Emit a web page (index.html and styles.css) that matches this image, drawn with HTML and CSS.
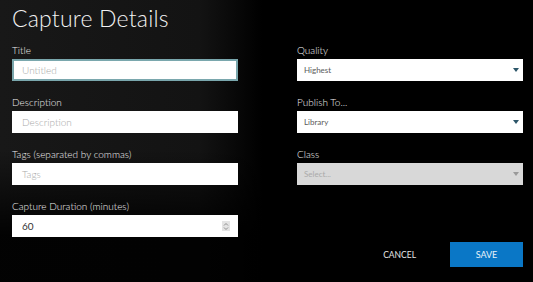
FILE: index.html
```
<!DOCTYPE html>
<html>
<head>
<meta charset="utf-8">
<link rel="stylesheet" href="styles.css">
</head>
<body>
<div class="dialog">
  <h1 class="heading">Capture Details</h1>
  <div class="cols">
    <div class="col">
      <div class="field">
        <label class="label">Title</label>
        <div class="input focused"><span class="ph">Untitled</span></div>
      </div>
      <div class="field">
        <label class="label">Description</label>
        <div class="input"><span class="ph">Description</span></div>
      </div>
      <div class="field">
        <label class="label">Tags (separated by commas)</label>
        <div class="input"><span class="ph">Tags</span></div>
      </div>
      <div class="field">
        <label class="label">Capture Duration (minutes)</label>
        <div class="input"><span class="val">60</span>
          <span class="spin">
            <svg width="6" height="9" viewBox="0 0 6 9"><path d="M1 3.5 L3 1.5 L5 3.5" fill="none" stroke="#777" stroke-width="0.8"/><path d="M1 5.5 L3 7.5 L5 5.5" fill="none" stroke="#777" stroke-width="0.8"/></svg>
          </span>
        </div>
      </div>
    </div>
    <div class="col">
      <div class="field">
        <label class="label">Quality</label>
        <div class="select"><span class="sval">Highest</span><span class="arrow"></span></div>
      </div>
      <div class="field">
        <label class="label">Publish To...</label>
        <div class="select"><span class="sval">Library</span><span class="arrow"></span></div>
      </div>
      <div class="field">
        <label class="label">Class</label>
        <div class="select disabled"><span class="sval">Select...</span><span class="arrow"></span></div>
      </div>
      <div class="actions">
        <span class="cancel">CANCEL</span>
        <span class="save">SAVE</span>
      </div>
    </div>
  </div>
</div>
</body>
</html>
```
FILE: styles.css
```
html, body {
  margin: 0;
  padding: 0;
  background: #000;
}
body {
  width: 533px;
  height: 282px;
  overflow: hidden;
  font-family: Lato, "Open Sans", sans-serif;
}
.dialog {
  width: 533px;
  height: 282px;
  box-sizing: border-box;
  padding: 4px 10px 0 12px;
  background:
    linear-gradient(to bottom, rgba(0,0,0,0) 0, rgba(0,0,0,0) 150px, rgba(0,0,0,0.9) 235px),
    linear-gradient(to right, #181818 0, #131313 200px, #000 262px);
}
.heading {
  margin: 0;
  font-size: 23px;
  line-height: 28px;
  font-weight: 300;
  color: #f2f2f2;
  letter-spacing: 0.2px;
}
.cols {
  display: grid;
  grid-template-columns: 226px 226px;
  column-gap: 59px;
  margin-top: 12px;
}
.col {
  display: flex;
  flex-direction: column;
  gap: 15px;
}
.field {
  display: flex;
  flex-direction: column;
}
.label {
  font-size: 10px;
  line-height: 13px;
  font-weight: 300;
  color: #f0f0f0;
  margin-bottom: 2px;
}
.input {
  height: 22px;
  box-sizing: border-box;
  background: #fff;
  display: flex;
  align-items: center;
  padding: 0 10px;
  font-size: 10px;
  font-weight: 300;
  position: relative;
}
.input.focused {
  border: 2px solid #7aa7ad;
  padding: 0 8px;
}
.ph { color: #a8a8a8; }
.val { color: #333; font-weight: 400; }
.spin {
  margin-left: auto;
  width: 8px;
  height: 10px;
  background: #e4e4e4;
  display: flex;
  align-items: center;
  justify-content: center;
  margin-right: -2px;
}
.select {
  height: 22px;
  box-sizing: border-box;
  background: #fff;
  display: flex;
  align-items: center;
  padding: 0 4px 0 7px;
  font-size: 8px;
  color: #5a5a5a;
}
.select.disabled {
  background: #d8d8d8;
  color: #aaa;
}
.arrow {
  margin-left: auto;
  width: 0;
  height: 0;
  border-left: 3px solid transparent;
  border-right: 3px solid transparent;
  border-top: 4px solid #2c5669;
}
.select.disabled .arrow { border-top-color: #999; }
.actions {
  display: flex;
  align-items: center;
  justify-content: flex-end;
  margin-top: 42px;
}
.cancel {
  font-size: 8.5px;
  color: #e6e6e6;
  margin-right: 34px;
}
.save {
  width: 73px;
  height: 25px;
  background: #0a77c6;
  color: #e8f2fa;
  font-size: 9px;
  display: flex;
  align-items: center;
  justify-content: center;
}
```
